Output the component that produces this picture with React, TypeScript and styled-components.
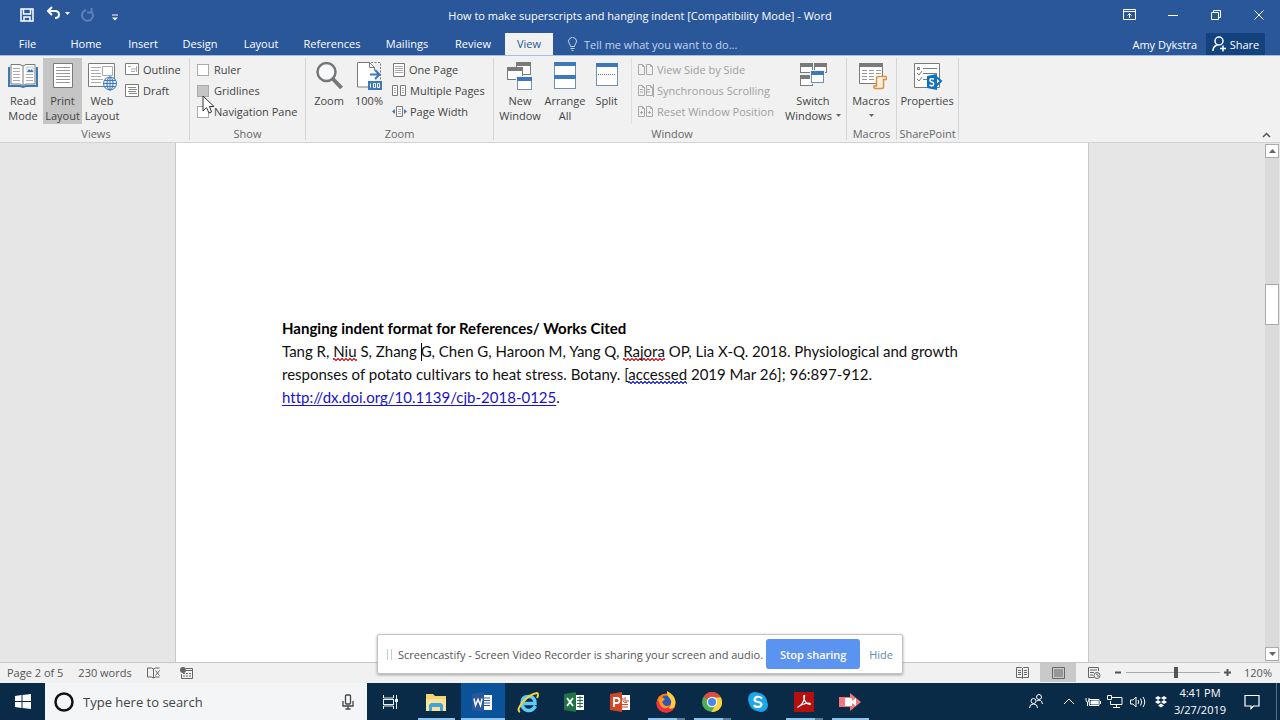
import React from 'react';
import styled, { createGlobalStyle, css } from 'styled-components';

const ui = '"Open Sans", "Noto Sans", sans-serif';

const Global = createGlobalStyle`
  * { box-sizing: border-box; }
  body { margin: 0; font-family: ${ui}; font-size: 11px; color: #444; }
  button, input { font: inherit; color: inherit; }
  button { border: 0; background: none; padding: 0; margin: 0; white-space: nowrap; }
  svg { display: block; flex: none; }
`;

const Shell = styled.div`
  display: flex;
  flex-direction: column;
  height: 100vh;
  overflow: hidden;
  position: relative;
  background: #e6e6e6;
`;

/* ---------- header ---------- */
const Header = styled.header`
  background: #2a579a;
  color: #fff;
  flex: none;
  border-bottom: 1px solid #a3bde3;
`;
const TitleBar = styled.div`
  display: grid;
  grid-template-columns: 1fr auto 1fr;
  align-items: center;
  height: 33px;
`;
const QuickAccess = styled.div`
  display: flex;
  align-items: center;
  gap: 10px;
  padding: 0 0 4px 19px;
`;
const Title = styled.h1`
  margin: 0;
  font-size: 11px;
  font-weight: 400;
  line-height: 30px;
  padding-bottom: 2px;
`;
const WindowButtons = styled.div`
  display: flex;
  justify-content: flex-end;
  padding-bottom: 4px;
`;
const WindowButton = styled.button`
  width: 43px;
  height: 28px;
  display: grid;
  place-items: center;
`;
const TabBar = styled.nav`
  display: flex;
  height: 22px;
  align-items: stretch;
`;
const Tab = styled.button<{ $w: number; $active?: boolean }>`
  width: ${p => p.$w}px;
  line-height: 22px;
  text-align: center;
  ${p => p.$active && css`background: #f1f1f1; color: #2a579a;`}
`;
const TellMe = styled.button`
  display: flex;
  align-items: center;
  gap: 6px;
  margin-left: 14px;
  color: #c3d3ec;
`;
const Account = styled.div`
  display: flex;
  align-items: center;
  gap: 9px;
  margin-left: auto;
  margin-right: 15px;
`;
const ShareButton = styled.button`
  display: flex;
  align-items: center;
  justify-content: center;
  gap: 4px;
  width: 59px;
  height: 22px;
  background: #14427c;
`;

/* ---------- ribbon ---------- */
const Ribbon = styled.section`
  display: flex;
  flex: none;
  height: 87px;
  padding-top: 2px;
  background: #f1f1f1;
  border-bottom: 1px solid #d2d2d2;
`;
const Group = styled.div<{ $w: number; $pad?: number }>`
  width: ${p => p.$w}px;
  padding-left: ${p => p.$pad || 0}px;
  display: grid;
  grid-template-rows: 66px 18px;
  border-right: 1px solid #d5d5d5;
  margin-bottom: 2px;
`;
const GroupBody = styled.div`
  display: flex;
`;
const GroupName = styled.div`
  text-align: center;
  line-height: 20px;
  color: #666;
`;
const BigButton = styled.button<{ $w: number; $active?: boolean }>`
  width: ${p => p.$w}px;
  height: 66px;
  display: flex;
  flex-direction: column;
  align-items: center;
  gap: 2px;
  padding-top: 1px;
  line-height: 15px;
  background: ${p => (p.$active ? '#c5c5c5' : 'none')};
  white-space: pre-line;
`;
const SmallColumn = styled.div<{ $gap?: number; $w?: number }>`
  display: flex;
  flex-direction: column;
  padding-top: 1px;
  margin-left: ${p => p.$gap || 0}px;
  ${p => p.$w && css`width: ${p.$w}px; border-left: 1px solid #e0e0e0; padding-left: 6px;`}
`;
const SmallButton = styled.button`
  display: flex;
  align-items: center;
  gap: 3px;
  height: 21px;
  &:disabled { color: #a0a0a0; }
`;
const CheckRow = styled.label`
  display: flex;
  align-items: center;
  gap: 5px;
  height: 21px;
  white-space: nowrap;
`;
const Check = styled.input<{ $hot?: boolean }>`
  appearance: none;
  margin: 0;
  width: 12px;
  height: 12px;
  border: 1px solid #ababab;
  background: ${p => (p.$hot ? '#c5c5c5' : '#fff')};
`;
const Collapse = styled.button`
  align-self: flex-end;
  margin: 0 9px 4px auto;
`;

/* ---------- document ---------- */
const Workspace = styled.main`
  flex: 1;
  min-height: 0;
  display: flex;
`;
const Canvas = styled.div`
  flex: 1;
  display: flex;
  justify-content: center;
`;
const Page = styled.article`
  width: 914px;
  background: #fff;
  border: solid #c8c8c8;
  border-width: 0 1px;
  padding: 174px 106px 0;
  font-family: Lato, Carlito, sans-serif;
  font-size: 15px;
  font-variant-ligatures: none;
  line-height: 23px;
  color: #111;
`;
const Heading = styled.h2`
  margin: 0;
  font-size: 15px;
  font-weight: 700;
  color: #000;
  white-space: nowrap;
`;
const Line = styled.div`
  height: 23px;
  white-space: nowrap;
`;
const Spell = styled.span<{ $c: string }>`
  padding-bottom: 1px;
  background:
    linear-gradient(45deg, transparent 35%, ${p => p.$c} 35% 65%, transparent 65%) 0 100% / 4px 3px repeat-x,
    linear-gradient(135deg, transparent 35%, ${p => p.$c} 35% 65%, transparent 65%) 2px 100% / 4px 3px repeat-x;
`;
const Caret = styled.span`
  display: inline-block;
  width: 1px;
  height: 18px;
  margin-right: -1px;
  background: #000;
  vertical-align: -4px;
`;
const DocLink = styled.a`
  color: #1a14c8;
  text-decoration: underline;
  text-underline-offset: 2px;
  text-decoration-skip-ink: none;
`;
const ScrollBar = styled.div`
  width: 16px;
  display: flex;
  flex-direction: column;
  align-items: center;
  padding: 1px 1px;
`;
const ScrollButton = styled.button`
  width: 14px;
  height: 14px;
  border: 1px solid #ababab;
  background: #fff;
  display: grid;
  place-items: center;
`;
const Track = styled.div`
  flex: 1;
  padding-top: 126px;
  background: #dadada;
`;
const Thumb = styled.div`
  width: 14px;
  height: 41px;
  border: 1px solid #ababab;
  background: #fff;
`;

/* ---------- status bar ---------- */
const StatusBar = styled.footer`
  flex: none;
  height: 21px;
  display: flex;
  align-items: center;
  background: #f1f1f1;
  border-top: 1px solid #c6c6c6;
  padding: 0 8px 1px 7px;
  color: #555;
`;
const StatusItem = styled.button<{ $ml?: number }>`
  margin-left: ${p => p.$ml || 0}px;
`;
const StatusTools = styled.div`
  display: flex;
  align-items: center;
  margin-left: auto;
`;
const ViewButton = styled.button<{ $active?: boolean }>`
  width: 36px;
  height: 19px;
  display: grid;
  place-items: center;
  background: ${p => (p.$active ? '#c9c9c9' : 'none')};
`;
const ZoomControls = styled.div`
  display: flex;
  align-items: center;
  gap: 4px;
  padding-left: 3px;
`;
const ZoomRange = styled.input`
  appearance: none;
  width: 94px;
  height: 12px;
  margin: 0;
  background: linear-gradient(#aaa, #aaa) center / 100% 1px no-repeat;
  &::-webkit-slider-thumb {
    appearance: none;
    width: 4px;
    height: 11px;
    background: #555;
  }
`;
const ZoomValue = styled.span`
  width: 37px;
  text-align: right;
`;

/* ---------- sharing notice ---------- */
const Notice = styled.aside`
  position: absolute;
  left: 50%;
  bottom: 46px;
  transform: translateX(-50%);
  width: 526px;
  height: 40px;
  display: flex;
  align-items: center;
  padding: 0 9px;
  background: #fff;
  border: 1px solid #c4c4c4;
  border-radius: 2px;
  box-shadow: 0 1px 3px rgba(0, 0, 0, 0.35);
  color: #555;
  white-space: nowrap;
`;
const Grip = styled.span`
  flex: none;
  width: 5px;
  height: 11px;
  border: solid #ccc;
  border-width: 0 1px;
  margin-right: 6px;
`;
const StopButton = styled.button`
  flex: none;
  margin-left: auto;
  width: 94px;
  height: 30px;
  border-radius: 3px;
  background: #5b93f0;
  color: #fff;
  font-weight: 600;
`;
const HideLink = styled.a`
  margin-left: 9px;
  color: #6585b8;
  text-decoration: none;
`;

/* ---------- taskbar ---------- */
const Taskbar = styled.footer`
  flex: none;
  height: 37px;
  display: flex;
  background: #0a2b48;
  color: #fff;
`;
const StartButton = styled.button`
  width: 45px;
  display: grid;
  place-items: center;
`;
const Search = styled.label`
  width: 322px;
  background: #f3f5f6;
  display: flex;
  align-items: center;
  padding: 0 12px 0 8px;
  gap: 8px;
`;
const SearchInput = styled.input`
  flex: 1;
  min-width: 0;
  border: 0;
  padding: 0;
  outline: 0;
  background: none;
  font-size: 13px;
  &::placeholder { color: #444; opacity: 1; }
`;
const TaskButton = styled.button<{ $open?: boolean; $stack?: boolean; $active?: boolean }>`
  width: 46px;
  display: grid;
  place-items: center;
  ${p => p.$open && css`
    background: linear-gradient(90deg, #8ec5ef 78%, ${p.$stack ? '#587e9f' : '#8ec5ef'} 78%) center bottom / 37px 2px no-repeat;
  `}
  ${p => p.$active && css`
    background:
      linear-gradient(#8ec5ef, #8ec5ef) right bottom / 44px 2px no-repeat,
      linear-gradient(#0a539b, #0a539b) right / 44px 100% no-repeat;
  `}
`;
const Tray = styled.div`
  margin-left: auto;
  display: flex;
  align-items: center;
`;
const TrayButton = styled.button<{ $w: number }>`
  width: ${p => p.$w}px;
  height: 37px;
  display: grid;
  place-items: center;
`;
const Clock = styled.div`
  width: 56px;
  text-align: center;
  line-height: 17px;
  padding-bottom: 2px;
`;
const ShowDesktop = styled.button`
  width: 4px;
  height: 37px;
  border-left: 1px solid #5b7188;
`;

const Pointer = styled.svg`
  position: absolute;
  left: 202px;
  top: 95px;
`;

/* ---------- drawings ---------- */
const G = '#7a7a7a';
const B = '#3d78b8';

const ReadIcon = () => (
  <svg width="32" height="32" viewBox="0 0 32 32" fill="none" stroke={G}>
    <path d="M2 8v19h11l3 1 3-1h11V8" stroke={B} strokeWidth="2" />
    <path d="M4 5.500h9l3 1.500 3-1.500h9V25h-9l-3 1.500L13 25H4z" fill="#fff" />
    <path d="M16 7v19" />
    <path d="M6 9.500h7M6 12.500h7M6 15.500h7M6 18.500h7M6 21.500h7M19 15.500h7M19 18.500h7M19 21.500h7" stroke="#aaa" />
    <rect x="20" y="8" width="6" height="5" fill="#fff" stroke="#b5c9df" /><path d="M20 13l2-3 1.500 1.500L24.500 10l2 3z" fill={B} stroke="none" />
  </svg>
);
const PrintIcon = () => (
  <svg width="32" height="32" viewBox="0 0 32 32" fill="none" stroke={G}>
    <path d="M6.500 4.500h19v24h-19z" fill="#fff" />
    <path d="M9 8.500h14M9 11.500h14M9 14.500h14M9 17.500h14M9 20.500h14M9 23.500h14" stroke="#999" />
  </svg>
);
const WebIcon = () => (
  <svg width="32" height="32" viewBox="0 0 32 32" fill="none" stroke={G}>
    <path d="M2.500 4.500h26v23h-26z" fill="#fff" />
    <path d="M5 8.500h10M5 11.500h8M5 14.500h10M5 17.500h10M5 20.500h12M5 23.500h10" stroke="#aaa" />
    <path d="M16.500 7.500h10v9h-10z" stroke="#aaa" />
    <circle cx="24" cy="24.500" r="6.500" fill="#e8f0f9" stroke={B} />
    <ellipse cx="24" cy="24.500" rx="3" ry="6.500" stroke={B} /><path d="M17.500 24.500h13M24 18v13M18.500 21.500h11M18.500 27.500h11" stroke={B} />
  </svg>
);
const OutlineIcon = () => (
  <svg width="15" height="13" viewBox="0 0 15 13" fill="none" stroke={G}>
    <path d="M.5.5h13v11H.5z" fill="#fff" /><path d="M3 3.500h3M6 6h5M6 8.500h4M11.500 3v6" stroke="#aaa" />
  </svg>
);
const DraftIcon = () => (
  <svg width="15" height="13" viewBox="0 0 15 13" fill="none" stroke={G}>
    <path d="M.5.5h13v12H.5z" fill="#fff" /><path d="M3 3.500h8M4 5.500h8M3 7.500h8M4 9.500h8" stroke="#888" />
  </svg>
);
const MagnifierIcon = () => (
  <svg width="32" height="32" viewBox="0 0 32 32" fill="none" stroke="#777">
    <circle cx="13.500" cy="13" r="9" fill="#f8fafb" strokeWidth="2.500" /><path d="M20 20l8.500 9" strokeWidth="4" />
  </svg>
);
const HundredIcon = () => (
  <svg width="32" height="32" viewBox="0 0 32 32" fill="none" stroke={G}>
    <path d="M4.500 3.500h13l5 5v20h-18z" fill="#fff" stroke="none" />
    <path d="M15 28H4.500V3.500h12l5 5v3M16.500 3.500v5h5" />
    <path d="M18 3.500h9.500V28" strokeDasharray="2 1.500" />
    <path d="M17 15.500h9M22 11l4.500 4.500L22 20" stroke={B} strokeWidth="2" />
    <rect x="15" y="22" width="14" height="9" fill={B} stroke="none" />
    <path d="M17.500 24.500v4M20.500 24.500h2v4h-2zM24.500 24.500h2v4h-2z" stroke="#fff" />
  </svg>
);
const OnePageIcon = () => (
  <svg width="14" height="16" viewBox="0 0 14 16" fill="none" stroke={G}>
    <path d="M1.500 1.500h11v13h-11z" fill="#fff" /><path d="M3 4.500h8M3 6.500h8M3 8.500h8M3 10.500h8" stroke="#aaa" />
  </svg>
);
const MultiPageIcon = () => (
  <svg width="15" height="12" viewBox="0 0 15 12" fill="none" stroke={G}>
    <path d="M.5.5h5v10h-5zM8.500.5h5v10h-5z" fill="#fff" /><path d="M2 3.500h2M2 5.500h2M2 7.500h2M10 3.500h2M10 5.500h2M10 7.500h2" stroke="#aaa" />
  </svg>
);
const PageWidthIcon = () => (
  <svg width="15" height="12" viewBox="0 0 15 12" fill="none" stroke={G}>
    <path d="M4.500.5h6v10h-6z" fill="#fff" /><path d="M6 3.500h3M6 5.500h3M6 7.500h3" stroke="#aaa" />
    <path d="M0 5.500L3 3v5zM15 5.500L12 3v5z" fill={B} stroke="none" />
  </svg>
);
const Win = ({ x, y, w, h, c }: { x: number; y: number; w: number; h: number; c: string }) => (
  <g><rect x={x + 0.5} y={y + 0.5} width={w - 1} height={h - 1} fill="#fff" stroke={c === B ? '#6f8fb3' : G} /><rect x={x} y={y} width={w} height="4" fill={c} /></g>
);
const NewWindowIcon = () => (
  <svg width="32" height="32" viewBox="0 0 32 32">
    <Win x={12} y={3} w={15} h={13} c={G} /><Win x={3} y={8} w={16} h={13} c={G} />
    <rect x="12" y="17" width="18" height="15" fill="#f1f1f1" /><Win x={13} y={18} w={15} h={13} c={B} />
  </svg>
);
const ArrangeIcon = () => (
  <svg width="32" height="32" viewBox="0 0 32 32"><Win x={5} y={3} w={22} h={14} c={B} /><Win x={5} y={16} w={22} h={14} c={B} /></svg>
);
const SplitIcon = () => (
  <svg width="32" height="32" viewBox="0 0 32 32"><Win x={5} y={4} w={22} h={23} c={B} /><path d="M7 15.500h18" stroke={G} strokeDasharray="1 1" /></svg>
);
const SideIcon = ({ kind }: { kind: number }) => (
  <svg width="16" height="13" viewBox="0 0 16 13" fill="none" stroke="#a8a8a8">
    <path d="M.5 1.500h4l2 2v8h-6zM8.500 1.500h4l2 2v8h-6zM4.500 1.500v2h2M12.500 1.500v2h2" />
    {kind === 1 && <path d="M2 5.500h3M2 8h3M9 5.500h3M9 8h3M15.500 0v13" />}
    {kind === 2 && <path d="M2 7.500h3M10 7.500h3M3.500 6v3M11.500 6v3" />}
  </svg>
);
const SwitchIcon = () => (
  <svg width="32" height="32" viewBox="0 0 32 32">
    <Win x={3} y={4} w={13} h={10} c={G} /><Win x={17} y={4} w={13} h={10} c={G} /><Win x={3} y={16} w={13} h={11} c={G} />
    <rect x="13" y="11" width="15" height="14" fill="#f1f1f1" /><Win x={14} y={12} w={13} h={12} c={B} />
  </svg>
);
const MacroIcon = () => (
  <svg width="32" height="32" viewBox="0 0 32 32" fill="none">
    <path d="M4.500 4.500h23v20h-23z" fill="#fff" stroke={G} /><path d="M4 4h24v4H4z" fill={G} />
    <path d="M7 11.500h5M14 11.500h5M21 11.500h5M7 14.500h5M14 14.500h5M21 14.500h5M7 17.500h5M14 17.500h5M7 20.500h5M14 20.500h5" stroke="#999" />
    <path d="M21.500 19.500q0-2 2-2h7q1.500 0 1 3h-3V28q0 1.500-2 1.500h-6q-2 0-1.500-2.500h2.500z" fill="#fdf3e7" stroke="#e08b3d" strokeWidth="1.500" />
  </svg>
);
const PropertiesIcon = () => (
  <svg width="32" height="32" viewBox="0 0 32 32" fill="none">
    <path d="M3.500 4.500h25v24h-25z" fill="#fff" stroke={G} />
    <path d="M6.500 8.500h2v2h-2zM12 9.500h14M12 14.500h14M12 20.500h6M6 14l2 2 3-4M6 20l2 2 3-4" stroke={G} />
    <path d="M23 16l7 6-7 7" fill="#fff" stroke="#0b72c4" strokeWidth="2" /><path d="M16 17l10-2v16l-10-2z" fill="#0b72c4" />
    <path d="M23 20q-4-1-4 1t2 2 1.500 2.500-4 .5" stroke="#fff" strokeWidth="1.500" />
  </svg>
);
const Down = ({ c = '#666' }: { c?: string }) => <svg width="5" height="3" viewBox="0 0 5 3"><path d="M0 0h5L2.500 3z" fill={c} /></svg>;

const Inline = styled.span`
  display: inline-flex;
  align-items: center;
  gap: 4px;
`;
const MenuMark = styled.span`
  padding-top: 4px;
`;

const tabs: [string, number][] = [
  ['File', 55], ['Home', 62], ['Insert', 52], ['Design', 62], ['Layout', 60],
  ['References', 82], ['Mailings', 68], ['Review', 64], ['View', 48],
];

const taskIcons: { name: string; open?: boolean; stack?: boolean; active?: boolean; art: React.ReactNode }[] = [
  { name: 'Task View', art: <g fill="none" stroke="#e8eef4"><path d="M4.500 4v3h10V4M4.500 18v-3h10v3M4.500 9v5M14.500 9v5M4 8.500h11M4 13.500h11M17.500 4v14" /><path d="M16 8h3v3h-3z" fill="#e8eef4" stroke="none" /></g> },
  { name: 'File Explorer', open: true, art: <g><path d="M1 3h7l2 2h11v15H1z" fill="#f5d573" /><path d="M1 8h20v12H1z" fill="#fbe39a" /><path d="M4 20v-6l2-2h10l2 2v6h-3v-4H7v4z" fill="#3fa4dd" /></g> },
  { name: 'Word', active: true, art: <g><path d="M10 4h11v15H10z" fill="#fff" /><path d="M13 7h6M13 9.500h6M13 12h6M13 14.500h6" stroke="#2a579a" /><path d="M1 3l12-2v20L1 19z" fill="#2a579a" /><path d="M3 7.500l1.500 7L7 8.500l2.500 6 1.500-7" stroke="#fff" fill="none" strokeWidth="1.500" /></g> },
  { name: 'Internet Explorer', art: <g fill="none"><path d="M18.500 15q-3 5-7.500 4.500-6-1-6-7.500T11.500 5.500 18 12.500H7" stroke="#5ecbf5" strokeWidth="3.500" /><path d="M3 21q-4-2 3-10T20 2q2 1 0 5" stroke="#f4d13f" strokeWidth="2" /></g> },
  { name: 'Excel', art: <g><path d="M12 4h9v15h-9z" fill="#fff" /><path d="M14 6.500h6M14 9.500h6M14 12.500h6M14 15.500h6M17 5v12" stroke="#217346" /><path d="M1 3l12-2v20L1 19z" fill="#217346" /><path d="M4 7l6 8M10 7l-6 8" stroke="#fff" strokeWidth="1.800" /></g> },
  { name: 'PowerPoint', art: <g><path d="M12 4h9v15h-9z" fill="#fff" /><path d="M13 13.500h6M13 16h6M16 6v4h4M14 7q-1 5 4 4.500" stroke="#d24726" fill="none" /><path d="M1 3l12-2v20L1 19z" fill="#d24726" /><path d="M5 16V7h3q2.500 0 2.500 2.500T8 12H5" stroke="#fff" fill="none" strokeWidth="1.800" /></g> },
  { name: 'Firefox', open: true, stack: true, art: <g><circle cx="11" cy="12" r="9.500" fill="#ff7a1a" /><path d="M2 9Q6 14 9 13l5 1q6-2 3-8 4 3 3.500 7-1 8-9 8.500Q2 21 1.500 13z" fill="#f0303f" /><circle cx="11" cy="10" r="5.500" fill="#2f55b5" /><path d="M12 0q8 4 8.500 11l-1 5q-3 3-6 1 5-5 1-10-3-3-2.500-7z" fill="#ffd03a" /><path d="M5 6q3 0 5 2l-3 3 2 3q3 2 6 0-2 4-6 3-4-1-5-6z" fill="#ff9a20" /></g> },
  { name: 'Chrome', open: true, stack: true, art: <g><circle cx="11" cy="11" r="10" fill="#4caf50" /><path d="M11 11L2.500 6Q6 1 11 1q6 0 9 5.500H11z" fill="#e04a3f" /><path d="M11 6.500h9Q23 14 17.500 19q-4 2.500-7 2L15 13z" fill="#fdd23e" /><circle cx="11" cy="11" r="5.200" fill="#fff" /><circle cx="11" cy="11" r="4" fill="#4a86e8" /></g> },
  { name: 'Skype', art: <g><rect x="1" y="1" width="14" height="14" rx="7" fill="#1ba8ea" /><rect x="7" y="7" width="14" height="14" rx="7" fill="#1ba8ea" /><circle cx="11" cy="11" r="9" fill="#1ba8ea" /><path d="M15 7.500Q13 5.500 10.500 5.800T7.500 8.500q0 2 3.500 2.500t3.500 2.500q-.5 2.500-3.500 2.500t-4-2" fill="none" stroke="#fff" strokeWidth="2.200" /></g> },
  { name: 'Acrobat', open: true, stack: true, art: <g><path d="M1 1h20v20H1z" fill="#b50f0f" /><path d="M5 16q6-3 6.500-10.500Q12 4 11 4.500q-1 4 3 8 3 1.500 3.500.5-1-2-8 .5Q5 15.500 5 16z" fill="none" stroke="#fff" strokeWidth="1.300" /></g> },
  { name: 'Screencastify', open: true, art: <g><path d="M0 6h11V2l11 9-11 9v-4H0z" fill="#f0787c" /><path d="M6 7h7v8H6zM13 10l4-3v8l-4-3z" fill="#fff" /></g> },
];

export default function App() {
  return (
    <Shell>
      <Global />
      <Header>
        <TitleBar>
          <QuickAccess>
            <button aria-label="Save"><svg width="16" height="16" viewBox="0 0 16 16" fill="none" stroke="#fff" strokeWidth="1.500"><path d="M2 2h12v12H2zM4.500 2v5h7V2M5 14v-4h6v4" /></svg></button>
            <button aria-label="Undo"><Inline><svg width="16" height="16" viewBox="0 0 16 16" fill="none" stroke="#fff" strokeWidth="2"><path d="M7 2L3 6l4 4M3.500 6H10q4 0 4 3.500T10 13" /></svg><Down c="#fff" /></Inline></button>
            <button aria-label="Redo"><svg width="16" height="16" viewBox="0 0 16 16" fill="none" stroke="#5d80b8" strokeWidth="2"><path d="M6 3a5.500 5.500 0 1 0 5 1M11.500 1v4.500H7" /></svg></button>
            <button aria-label="Customize"><svg width="16" height="16" viewBox="0 0 16 16"><path d="M6 8h6" stroke="#fff" /><path d="M6 10.500h6l-3 3z" fill="#fff" /></svg></button>
          </QuickAccess>
          <Title>How to make superscripts and hanging indent [Compatibility Mode] - Word</Title>
          <WindowButtons>
            <WindowButton aria-label="Ribbon options"><svg width="13" height="11" viewBox="0 0 13 11" fill="none" stroke="#fff"><path d="M.5.5h12v10H.5zM.5 2.500h12M6.500 9V4.500M4.500 6.500l2-2 2 2" /></svg></WindowButton>
            <WindowButton aria-label="Minimize"><svg width="10" height="10" viewBox="0 0 10 10"><path d="M0 5.500h10" stroke="#fff" /></svg></WindowButton>
            <WindowButton aria-label="Restore"><svg width="10" height="10" viewBox="0 0 10 10" fill="none" stroke="#fff"><path d="M.5 2.500h7v7h-7zM2.500 2.500v-2h7v7h-2" /></svg></WindowButton>
            <WindowButton aria-label="Close"><svg width="10" height="10" viewBox="0 0 10 10"><path d="M.5.5l9 9M9.500.5l-9 9" stroke="#fff" /></svg></WindowButton>
          </WindowButtons>
        </TitleBar>
        <TabBar>
          {tabs.map(([name, w]) => <Tab key={name} $w={w} $active={name === 'View'}>{name}</Tab>)}
          <TellMe>
            <svg width="11" height="14" viewBox="0 0 11 14" fill="none" stroke="#c3d3ec"><path d="M3.500 9.500Q3.500 8 2.500 7a4 4 0 1 1 6 0q-1 1-1 2.500zM3.500 11.500h4M4.500 13.500h2" /></svg>
            Tell me what you want to do...
          </TellMe>
          <Account>
            <span>Amy Dykstra</span>
            <ShareButton>
              <svg width="14" height="16" viewBox="0 0 14 16" fill="none" stroke="#fff" strokeWidth="1.500"><circle cx="7" cy="5" r="4" /><path d="M1 15q0-5 4.500-6M8 12.500h6M11 9.500v6" /></svg>
              Share
            </ShareButton>
          </Account>
        </TabBar>
      </Header>

      <Ribbon>
        <Group $w={190} $pad={3}>
          <GroupBody>
            <BigButton $w={40}><ReadIcon />{'Read\nMode'}</BigButton>
            <BigButton $w={39} $active><PrintIcon />{'Print\nLayout'}</BigButton>
            <BigButton $w={40}><WebIcon />{'Web\nLayout'}</BigButton>
            <SmallColumn $gap={3}>
              <SmallButton><OutlineIcon />Outline</SmallButton>
              <SmallButton><DraftIcon />Draft</SmallButton>
            </SmallColumn>
          </GroupBody>
          <GroupName>Views</GroupName>
        </Group>
        <Group $w={116}>
          <GroupBody>
            <SmallColumn $gap={7}>
              <CheckRow><Check type="checkbox" />Ruler</CheckRow>
              <CheckRow><Check type="checkbox" $hot />Gridlines</CheckRow>
              <CheckRow><Check type="checkbox" />Navigation Pane</CheckRow>
            </SmallColumn>
          </GroupBody>
          <GroupName>Show</GroupName>
        </Group>
        <Group $w={188}>
          <GroupBody>
            <BigButton $w={46}><MagnifierIcon />Zoom</BigButton>
            <BigButton $w={34}><HundredIcon />100%</BigButton>
            <SmallColumn $gap={6}>
              <SmallButton><OnePageIcon />One Page</SmallButton>
              <SmallButton><MultiPageIcon />Multiple Pages</SmallButton>
              <SmallButton><PageWidthIcon />Page Width</SmallButton>
            </SmallColumn>
          </GroupBody>
          <GroupName>Zoom</GroupName>
        </Group>
        <Group $w={353} $pad={4}>
          <GroupBody>
            <BigButton $w={44}><NewWindowIcon />{'New\nWindow'}</BigButton>
            <BigButton $w={46}><ArrangeIcon />{'Arrange\nAll'}</BigButton>
            <BigButton $w={37}><SplitIcon />Split</BigButton>
            <SmallColumn $gap={6} $w={152}>
              <SmallButton disabled><SideIcon kind={0} />View Side by Side</SmallButton>
              <SmallButton disabled><SideIcon kind={1} />Synchronous Scrolling</SmallButton>
              <SmallButton disabled><SideIcon kind={2} />Reset Window Position</SmallButton>
            </SmallColumn>
            <BigButton $w={60}><SwitchIcon /><span>Switch<br /><Inline>Windows<Down /></Inline></span></BigButton>
          </GroupBody>
          <GroupName>Window</GroupName>
        </Group>
        <Group $w={50}>
          <GroupBody><BigButton $w={48}><MacroIcon />Macros<MenuMark><Down /></MenuMark></BigButton></GroupBody>
          <GroupName>Macros</GroupName>
        </Group>
        <Group $w={62}>
          <GroupBody><BigButton $w={60}><PropertiesIcon />Properties</BigButton></GroupBody>
          <GroupName>SharePoint</GroupName>
        </Group>
        <Collapse aria-label="Collapse ribbon"><svg width="9" height="6" viewBox="0 0 9 6"><path d="M1 5l3.500-3.500L8 5" fill="none" stroke="#555" strokeWidth="1.500" /></svg></Collapse>
      </Ribbon>

      <Workspace>
        <Canvas>
          <Page>
            <Heading>Hanging indent format for References/ Works Cited</Heading>
            <Line>Tang R, <Spell $c="#e0323c">Niu</Spell> S, Zhang <Caret />G, Chen G, Haroon M, Yang Q, <Spell $c="#e0323c">Rajora</Spell> OP, Lia X-Q. 2018. Physiological and growth</Line>
            <Line>responses of potato cultivars to heat stress. Botany. [<Spell $c="#3a43d6">accessed</Spell> 2019 Mar 26]; 96:897-912.</Line>
            <Line><DocLink href="http://dx.doi.org/10.1139/cjb-2018-0125">http://dx.doi.org/10.1139/cjb-2018-0125</DocLink>.</Line>
          </Page>
        </Canvas>
        <ScrollBar>
          <ScrollButton aria-label="Scroll up"><svg width="7" height="4" viewBox="0 0 7 4"><path d="M0 4h7L3.500 0z" fill="#666" /></svg></ScrollButton>
          <Track><Thumb /></Track>
          <ScrollButton aria-label="Scroll down"><svg width="7" height="4" viewBox="0 0 7 4"><path d="M0 0h7L3.500 4z" fill="#666" /></svg></ScrollButton>
        </ScrollBar>
      </Workspace>

      <StatusBar>
        <StatusItem>Page 2 of 5</StatusItem>
        <StatusItem $ml={15}>230 words</StatusItem>
        <StatusItem $ml={15} aria-label="Proofing"><svg width="14" height="12" viewBox="0 0 14 12" fill="none" stroke="#666"><path d="M6.500 11L4.500 10H.5V1h4l2 1zM6.500 2l2-1h4M6.500 11l2-1h4M8.500 3.500l4 5M12.500 3.500l-4 5" /></svg></StatusItem>
        <StatusItem $ml={19} aria-label="Macro recording"><svg width="13" height="12" viewBox="0 0 13 12"><circle cx="3" cy="3" r="3" fill="#666" /><path d="M6 1.500h6.500v10h-11V7M3 6.500h2M6 6.500h2M9 6.500h2M3 9h2M6 9h2M9 9h2M6 3.500h6" fill="none" stroke="#666" /></svg></StatusItem>
        <StatusTools>
          <ViewButton aria-label="Read mode"><svg width="13" height="12" viewBox="0 0 13 12" fill="none" stroke="#666"><path d="M.5.5h5l1 1 1-1h5v10h-5l-1 1-1-1h-5zM6.500 1v10M2 3.500h3M2 5.500h3M2 7.500h3M8 3.500h3M8 5.500h3M8 7.500h3" /></svg></ViewButton>
          <ViewButton $active aria-label="Print layout"><svg width="13" height="12" viewBox="0 0 13 12" fill="none" stroke="#666"><path d="M.5.5h12v11H.5zM2 3h9M2 5h9M2 7h9M2 9h9" /></svg></ViewButton>
          <ViewButton aria-label="Web layout"><svg width="13" height="12" viewBox="0 0 13 12" fill="none" stroke="#666"><path d="M6 10.500H.5V.5h10V4M2 3h7M2 5.500h4M2 8h3" /><circle cx="9" cy="8.500" r="3" /><path d="M8 7l2 1v2" /></svg></ViewButton>
          <ZoomControls>
            <button aria-label="Zoom out"><svg width="7" height="7" viewBox="0 0 7 7"><path d="M0 3.500h6" stroke="#555" strokeWidth="2" /></svg></button>
            <ZoomRange type="range" aria-label="Zoom" min={0} max={100} defaultValue={53} />
            <button aria-label="Zoom in"><svg width="7" height="7" viewBox="0 0 7 7"><path d="M0 3.500h7M3.500 0v7" stroke="#555" strokeWidth="2" /></svg></button>
            <ZoomValue>120%</ZoomValue>
          </ZoomControls>
        </StatusTools>
      </StatusBar>

      <Taskbar>
        <StartButton aria-label="Start"><svg width="16" height="15" viewBox="0 0 16 15" fill="#fff"><path d="M0 2l6.500-1v6H0zM7.500.9L16 0v7H7.500zM0 8h6.500v6L0 13zM7.500 8H16v7l-8.500-1z" /></svg></StartButton>
        <Search>
          <svg width="22" height="22" viewBox="0 0 22 22"><circle cx="11" cy="11" r="8.500" fill="none" stroke="#111" strokeWidth="2.500" /></svg>
          <SearchInput placeholder="Type here to search" aria-label="Search" />
          <svg width="14" height="16" viewBox="0 0 14 16" fill="none" stroke="#444" strokeWidth="1.300"><rect x="4.500" y="1" width="5" height="9" rx="1" /><path d="M2 7v5h10V7M7 12v3M4.500 15h5" /></svg>
        </Search>
        {taskIcons.map(t => (
          <TaskButton key={t.name} aria-label={t.name} $open={t.open} $stack={t.stack} $active={t.active}>
            <svg width="22" height="22" viewBox="0 0 22 22">{t.art}</svg>
          </TaskButton>
        ))}
        <Tray>
          <TrayButton $w={40} aria-label="People"><svg width="14" height="15" viewBox="0 0 14 15" fill="none" stroke="#fff"><circle cx="4.500" cy="7" r="2.500" /><circle cx="10" cy="3" r="2.500" /><path d="M.5 14q0-4 4-4t4 4M7.500 7q5-2.500 6 3" /></svg></TrayButton>
          <TrayButton $w={26} aria-label="Show hidden icons"><svg width="12" height="7" viewBox="0 0 12 7"><path d="M1 6l5-5 5 5" fill="none" stroke="#fff" /></svg></TrayButton>
          <TrayButton $w={22} aria-label="Battery"><svg width="16" height="12" viewBox="0 0 16 12" fill="none" stroke="#fff"><path d="M4 3.500h10v6H4.500zM15.500 5v3M1 2v2q0 2 1.500 2T4 4V2M2.500 6v4" /><path d="M6 5h7v3H6z" fill="#fff" /></svg></TrayButton>
          <TrayButton $w={22} aria-label="Network"><svg width="16" height="14" viewBox="0 0 16 14" fill="none" stroke="#fff"><path d="M5 2.500h10v7H3.500V6M.5.5h4v4h-4zM9.500 9.500v3M6 12.500h7" /></svg></TrayButton>
          <TrayButton $w={23} aria-label="Volume"><svg width="16" height="12" viewBox="0 0 16 12" fill="none" stroke="#fff"><path d="M.5 4h2.500L6 1v10L3 8H.5zM8 4q1.500 2 0 4M10.500 2.500q2.500 3.500 0 7M13 1q3.500 5 0 10" /></svg></TrayButton>
          <TrayButton $w={23} aria-label="Dropbox"><svg width="12" height="12" viewBox="0 0 12 12" fill="#fff"><path d="M3 0l3 2-3 2-3-2zM9 0l3 2-3 2-3-2zM3 4l3 2-3 2-3-2zM9 4l3 2-3 2-3-2zM6 7.500L9 9.500l-3 2-3-2z" /></svg></TrayButton>
          <Clock>4:41 PM<br />3/27/2019</Clock>
          <TrayButton $w={48} aria-label="Notifications"><svg width="16" height="16" viewBox="0 0 16 16" fill="none" stroke="#fff" strokeWidth="1.200"><path d="M1 1.500h14V12H9.500L7 14.500V12H1z" /></svg></TrayButton>
          <ShowDesktop aria-label="Show desktop" />
        </Tray>
      </Taskbar>

      <Notice>
        <Grip />
        Screencastify - Screen Video Recorder is sharing your screen and audio.
        <StopButton>Stop sharing</StopButton>
        <HideLink href="#hide">Hide</HideLink>
      </Notice>
      <Pointer width="14" height="20" viewBox="0 0 14 20"><path d="M1 1v15l3.500-3.500L7 18l2.500-1L7.500 11.500H12z" fill="#fff" stroke="#333" /></Pointer>
    </Shell>
  );
}
